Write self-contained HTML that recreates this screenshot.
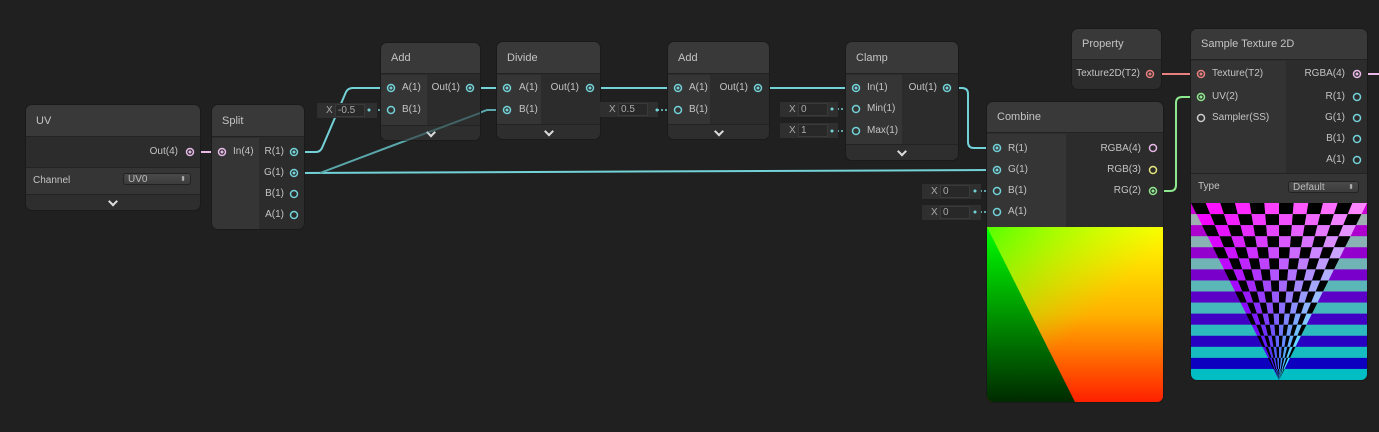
<!DOCTYPE html>
<html><head><meta charset="utf-8"><style>
body{margin:0;width:1379px;height:432px;background:#202020;overflow:hidden;position:relative;font-family:"Liberation Sans",sans-serif;font-size:10px;color:#c4c4c4}
.n{position:absolute;background:#2c2c2c;border-radius:6px;overflow:hidden;box-shadow:0 0 0 1px #1a1a1a}
.h{position:absolute;left:0;right:0;top:0;background:#393939;border-bottom:1px solid #232323;font-size:11px;padding-left:10px;box-sizing:border-box}
.ic{position:absolute;background:#353535}
.ft{position:absolute;left:0;right:0;bottom:0;background:#2e2e2e;border-top:1px solid #232323}
.ft:after{content:"";position:absolute;left:50%;top:3px;width:5px;height:5px;border-right:2px solid #ddd;border-bottom:2px solid #ddd;transform:translateX(-50%) rotate(45deg)}
.t{position:absolute;white-space:nowrap;line-height:12px}
.fld{position:absolute;background:#2f2f2f;height:15px}
.fld span{position:absolute;left:9px;top:0;line-height:15px;color:#aaa}
.fld i{position:absolute;left:18px;top:1px;width:30px;height:13px;background:#282828;border:1px solid #3a3a3a;box-sizing:border-box;font-style:normal;color:#aaa;padding-left:2px;line-height:11px}
.dd{position:absolute;height:12px;border-radius:3px;background:linear-gradient(#4a4a4a,#3c3c3c);border:1px solid #222;color:#bbb;padding-left:4px;box-sizing:border-box;line-height:11px}
.dd:after{content:"⬍";position:absolute;right:4px;top:0;font-size:7px}
</style></head><body>
<svg width="1379" height="432" style="position:absolute;left:0;top:0" fill="none">
<g stroke="#72d2d8" stroke-width="2">
<path d="M300 152 H316 Q320 152 322 148 L346 92 Q348 88 353 88 H386"/>
<path d="M300 173 L992 170"/>
<path d="M476 88 H502"/><path d="M596 88 H673"/><path d="M764 88 H851"/>
<path d="M953 88 H962 Q968 88 968 94 V142 Q968 148 974 148 H992"/>
</g>
<path d="M320 173 L487 110 H502" stroke="#5aa8ac" stroke-width="2"/>
<path d="M196 152 H217" stroke="#e8b8e8" stroke-width="2"/>
<path d="M1156 74 H1196" stroke="#e88080" stroke-width="2"/>
<path d="M1363 74 H1379" stroke="#e8b8e8" stroke-width="2"/>
<path d="M1159 191 H1170 Q1176 191 1176 185 V103 Q1176 97 1182 97 H1196" stroke="#8ee88e" stroke-width="2"/>
<g stroke="#72d2d8" stroke-width="1.5" stroke-dasharray="2 2">
<path d="M370 110 H386"/><path d="M657 110 H673"/><path d="M833 109 H851"/><path d="M833 131 H851"/><path d="M976 191 H992"/><path d="M976 212 H992"/>
</g>
</svg>

<!-- UV -->
<div class="n" style="left:26px;top:105px;width:174px;height:105px">
<div class="h" style="height:32px;line-height:32px">UV</div>
<div style="position:absolute;left:0;right:0;top:62px;height:28px;background:#353535;border-top:1px solid #232323"></div>
<div class="t" style="right:22px;top:41px">Out(4)</div>
<div class="t" style="left:7px;top:70px">Channel</div>
<div class="dd" style="left:97px;top:68px;width:68px">UV0</div>
<div class="ft" style="height:15px"></div>
</div>
<!-- Split -->
<div class="n" style="left:212px;top:105px;width:92px;height:124px">
<div class="h" style="height:32px;line-height:32px">Split</div>
<div class="ic" style="left:0;top:33px;width:47px;bottom:0"></div>
<div class="t" style="left:21px;top:41px">In(4)</div>
<div class="t" style="right:20px;top:41px">R(1)</div>
<div class="t" style="right:20px;top:62px">G(1)</div>
<div class="t" style="right:20px;top:83px">B(1)</div>
<div class="t" style="right:20px;top:104px">A(1)</div>
</div>
<div class="fld" style="left:317px;top:103px;width:60px"><span>X</span><i>-0.5</i></div>
<!-- Add1 -->
<div class="n" style="left:381px;top:43px;width:99px;height:97px">
<div class="h" style="height:31px;line-height:31px">Add</div>
<div class="ic" style="left:0;top:32px;width:46px;height:51px"></div>
<div class="t" style="left:21px;top:39px">A(1)</div>
<div class="t" style="left:21px;top:61px">B(1)</div>
<div class="t" style="right:20px;top:39px">Out(1)</div>
<div class="ft" style="height:14px"></div>
</div>
<!-- Divide -->
<div class="n" style="left:497px;top:42px;width:103px;height:97px">
<div class="h" style="height:32px;line-height:32px">Divide</div>
<div class="ic" style="left:0;top:33px;width:44px;height:50px"></div>
<div class="t" style="left:22px;top:40px">A(1)</div>
<div class="t" style="left:22px;top:62px">B(1)</div>
<div class="t" style="right:21px;top:40px">Out(1)</div>
<div class="ft" style="height:14px"></div>
</div>
<div class="fld" style="left:600px;top:102px;width:58px"><span>X</span><i>0.5</i></div>
<!-- Add2 -->
<div class="n" style="left:668px;top:42px;width:101px;height:97px">
<div class="h" style="height:32px;line-height:32px">Add</div>
<div class="ic" style="left:0;top:33px;width:42px;height:50px"></div>
<div class="t" style="left:21px;top:40px">A(1)</div>
<div class="t" style="left:21px;top:62px">B(1)</div>
<div class="t" style="right:21px;top:40px">Out(1)</div>
<div class="ft" style="height:14px"></div>
</div>
<div class="fld" style="left:780px;top:102px;width:58px"><span>X</span><i>0</i></div>
<div class="fld" style="left:780px;top:123px;width:58px"><span>X</span><i>1</i></div>
<!-- Clamp -->
<div class="n" style="left:846px;top:42px;width:112px;height:118px">
<div class="h" style="height:32px;line-height:32px">Clamp</div>
<div class="ic" style="left:0;top:33px;width:56px;height:70px"></div>
<div class="t" style="left:21px;top:40px">In(1)</div>
<div class="t" style="left:21px;top:61px">Min(1)</div>
<div class="t" style="left:21px;top:83px">Max(1)</div>
<div class="t" style="right:21px;top:40px">Out(1)</div>
<div class="ft" style="height:15px"></div>
</div>
<!-- Property -->
<div class="n" style="left:1072px;top:29px;width:89px;height:60px">
<div class="h" style="height:31px;line-height:31px">Property</div>
<div class="t" style="right:21px;top:39px">Texture2D(T2)</div>
</div>
<div class="fld" style="left:922px;top:184px;width:59px"><span>X</span><i>0</i></div>
<div class="fld" style="left:922px;top:205px;width:59px"><span>X</span><i>0</i></div>
<!-- Combine -->
<div class="n" style="left:987px;top:102px;width:176px;height:300px">
<div class="h" style="height:31px;line-height:31px">Combine</div>
<div class="ic" style="left:0;top:32px;width:79px;height:93px"></div>
<div class="t" style="left:21px;top:41px">R(1)</div>
<div class="t" style="left:21px;top:62px">G(1)</div>
<div class="t" style="left:21px;top:83px">B(1)</div>
<div class="t" style="left:21px;top:104px">A(1)</div>
<div class="t" style="right:22px;top:41px">RGBA(4)</div>
<div class="t" style="right:22px;top:62px">RGB(3)</div>
<div class="t" style="right:22px;top:83px">RG(2)</div>
<svg style="position:absolute;left:0;top:125px" width="176" height="175">
<defs>
<linearGradient id="ry" x1="0" y1="0" x2="0" y2="1"><stop offset="0" stop-color="#ffff00"/><stop offset="0.5" stop-color="#ffb000"/><stop offset="1" stop-color="#ff2000"/></linearGradient>
<linearGradient id="gx" x1="0" y1="0" x2="1" y2="1"><stop offset="0" stop-color="#40ff00" stop-opacity=".9"/><stop offset=".55" stop-color="#a0ff00" stop-opacity="0"/></linearGradient>
<linearGradient id="gg" x1="0" y1="0" x2="0" y2="1"><stop offset="0" stop-color="#00ff00"/><stop offset="1" stop-color="#002a00"/></linearGradient>
</defs>
<rect width="176" height="175" fill="url(#ry)"/>
<rect width="176" height="175" fill="url(#gx)"/>
<polygon points="0,0 88,175 0,175" fill="url(#gg)"/>
</svg>
</div>
<!-- Sample Texture 2D -->
<div class="n" style="left:1191px;top:29px;width:176px;height:351px">
<div class="h" style="height:31px;line-height:31px">Sample Texture 2D</div>
<div class="ic" style="left:0;top:32px;width:95px;height:112px;background:#333"></div>
<div style="position:absolute;left:0;right:0;top:144px;height:30px;background:#353535;border-top:1px solid #232323"></div>
<div class="t" style="left:21px;top:39px">Texture(T2)</div>
<div class="t" style="left:21px;top:62px">UV(2)</div>
<div class="t" style="left:21px;top:83px">Sampler(SS)</div>
<div class="t" style="right:22px;top:39px">RGBA(4)</div>
<div class="t" style="right:22px;top:62px">R(1)</div>
<div class="t" style="right:22px;top:83px">G(1)</div>
<div class="t" style="right:22px;top:104px">B(1)</div>
<div class="t" style="right:22px;top:125px">A(1)</div>
<div class="t" style="left:7px;top:152px">Type</div>
<div class="dd" style="left:97px;top:152px;width:71px">Default</div>
<svg id="tex" style="position:absolute;left:0;top:174px" width="176" height="177"></svg>
</div>

<!-- ports -->
<svg width="1379" height="432" style="position:absolute;left:0;top:0" fill="none" stroke-width="1.5">
<path d="M381 150 L480 113" stroke="#5aa8ac" stroke-width="2" opacity="0.45"/>
<g stroke="#e8b8e8"><circle cx="190" cy="152" r="3.5"/><circle cx="222" cy="152" r="3.5"/><circle cx="1357" cy="74" r="3.5"/><circle cx="1153" cy="148" r="3.5"/></g>
<g fill="#e8b8e8"><circle cx="190" cy="152" r="1.5"/><circle cx="222" cy="152" r="1.5"/><circle cx="1357" cy="74" r="1.5"/></g>
<g stroke="#72d2d8">
<circle cx="294" cy="152" r="3.5"/><circle cx="294" cy="173" r="3.5"/><circle cx="294" cy="194" r="3.5"/><circle cx="294" cy="215" r="3.5"/>
<circle cx="391" cy="88" r="3.5"/><circle cx="391" cy="110" r="3.5"/><circle cx="470" cy="88" r="3.5"/>
<circle cx="507" cy="88" r="3.5"/><circle cx="507" cy="110" r="3.5"/><circle cx="590" cy="88" r="3.5"/>
<circle cx="678" cy="88" r="3.5"/><circle cx="678" cy="110" r="3.5"/><circle cx="758" cy="88" r="3.5"/>
<circle cx="856" cy="88" r="3.5"/><circle cx="856" cy="109" r="3.5"/><circle cx="856" cy="131" r="3.5"/><circle cx="947" cy="88" r="3.5"/>
<circle cx="997" cy="148" r="3.5"/><circle cx="997" cy="170" r="3.5"/><circle cx="997" cy="191" r="3.5"/><circle cx="997" cy="212" r="3.5"/>
<circle cx="1357" cy="97" r="3.5"/><circle cx="1357" cy="118" r="3.5"/><circle cx="1357" cy="139" r="3.5"/><circle cx="1357" cy="160" r="3.5"/>
</g>
<g fill="#72d2d8">
<circle cx="294" cy="152" r="1.5"/><circle cx="294" cy="173" r="1.5"/><circle cx="391" cy="88" r="1.5"/><circle cx="470" cy="88" r="1.5"/>
<circle cx="507" cy="88" r="1.5"/><circle cx="507" cy="110" r="1.5"/><circle cx="590" cy="88" r="1.5"/><circle cx="678" cy="88" r="1.5"/><circle cx="758" cy="88" r="1.5"/>
<circle cx="856" cy="88" r="1.5"/><circle cx="947" cy="88" r="1.5"/><circle cx="997" cy="148" r="1.5"/><circle cx="997" cy="170" r="1.5"/>
<circle cx="369" cy="110" r="1.5"/><circle cx="657" cy="110" r="1.5"/><circle cx="832" cy="109" r="1.5"/><circle cx="832" cy="131" r="1.5"/><circle cx="975" cy="191" r="1.5"/><circle cx="975" cy="212" r="1.5"/>
</g>
<circle cx="1153" cy="170" r="3.5" stroke="#e8e880"/>
<circle cx="1153" cy="191" r="3.5" stroke="#8ee88e"/><circle cx="1153" cy="191" r="1.5" fill="#8ee88e"/>
<circle cx="1201" cy="97" r="3.5" stroke="#8ee88e"/><circle cx="1201" cy="97" r="1.5" fill="#8ee88e"/>
<circle cx="1150" cy="74" r="3.5" stroke="#e88080"/><circle cx="1150" cy="74" r="1.5" fill="#e88080"/>
<circle cx="1201" cy="74" r="3.5" stroke="#e88080"/><circle cx="1201" cy="74" r="1.5" fill="#e88080"/>
<circle cx="1201" cy="118" r="3.5" stroke="#ccc"/>
</svg>
<script>
(function(){
var s=document.getElementById('tex'),h='';
var W=176,H=177,R=16,C=12,rh=H/R,ax=88;
function L(a,b,t){return Math.round(a+(b-a)*t)}
for(var i=0;i<R;i++){var v=i/(R-1);var c=i%2==0?'rgb('+L(200,0,v)+',0,'+L(210,190,v)+')':'rgb('+L(170,0,v)+','+L(175,190,v)+','+L(175,195,v)+')';
h+='<rect x="0" y="'+(i*rh)+'" width="176" height="'+(rh+0.5)+'" fill="'+c+'"/>';}
for(var i=0;i<R;i++){var y0=i*rh,y1=(i+1)*rh,k0=1-y0/H,k1=1-y1/H;
for(var j=0;j<C;j++){var u0=j/C*W-ax,u1=(j+1)/C*W-ax;
var pts=(ax+u0*k0)+','+y0+' '+(ax+u1*k0)+','+y0+' '+(ax+u1*k1)+','+y1+' '+(ax+u0*k1)+','+y1;
var v=i/R,u=(j+.5)/C;
var c='#000';
if((i+j)%2){c='rgb('+L(255,50,v)+','+Math.round(u*230*(0.5+0.5*v)+u*25)+',255)';}
h+='<polygon points="'+pts+'" fill="'+c+'"/>';}}
s.innerHTML=h;})();
</script>
</body></html>
